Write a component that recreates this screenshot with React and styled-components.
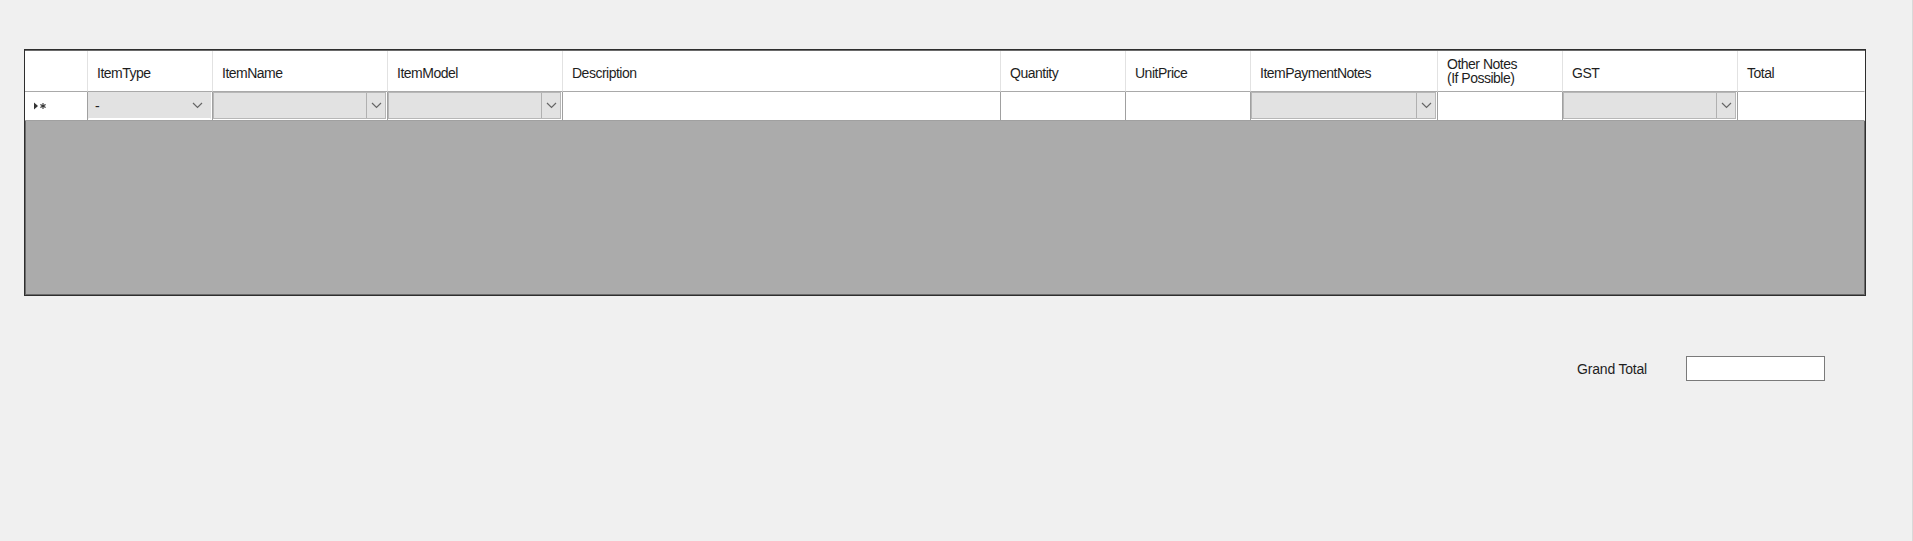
import React from 'react';
import styled, { createGlobalStyle } from 'styled-components';

const GlobalStyle = createGlobalStyle`
    html, body {
        margin: 0;
        padding: 0;
        background: #f0f0f0;
    }
    body {
        font-family: 'Liberation Sans', Arial, sans-serif;
        font-size: 14px;
        color: #1a1a1a;
    }
`;

const Page = styled.div`
    width: 1913px;
    height: 541px;
    box-sizing: border-box;
    padding: 49px 0 0 24px;
    border-right: 1px solid #d9d9d9;
    background: #f0f0f0;
`;

const Grid = styled.div`
    width: 1842px;
    height: 247px;
    box-sizing: border-box;
    border: 1px solid #2e2e2e;
    box-shadow: inset 1px 1px 0 #6a6a6a, inset -1px -1px 0 #6a6a6a;
    background: #ababab;
    display: grid;
    grid-template-columns: 63px 125px 175px 175px 438px 125px 125px 187px 125px 175px 1fr;
    grid-template-rows: 42px 29px;
    align-content: start;
`;

const HeadCell = styled.div`
    background: #fff;
    border-right: 1px solid ${p => (p.$last ? 'transparent' : '#e2e2e2')};
    border-bottom: 1px solid #a9a9a9;
    display: flex;
    align-items: center;
    padding: ${p => (p.$wrap ? '0 9px 1px' : '3px 9px 0')};
    font-size: 14px;
    line-height: 14px;
    letter-spacing: -0.5px;
    color: #1e1e1e;
    margin-top: 1px;
`;

const RowHead = styled.div`
    background: #fff;
    border-right: 1px solid #a0a0a0;
    border-bottom: 1px solid #a0a0a0;
    display: flex;
    align-items: center;
    padding-left: 9px;
`;

const Cell = styled.div`
    background: #fff;
    border-right: 1px solid ${p => (p.$last ? 'transparent' : '#a0a0a0')};
    border-bottom: 1px solid #a0a0a0;
    box-sizing: border-box;
    display: flex;
    padding: ${p => (p.$combo ? '0 1px 1px 0' : '0')};
`;

const Combo = styled.div`
    flex: 1;
    display: flex;
    align-items: center;
    background: #e2e2e2;
    border: 1px solid ${p => (p.$current ? '#e2e2e2' : '#b7b7b7')};
    border-bottom-color: ${p => (p.$current ? '#fff' : '#b7b7b7')};
    box-sizing: border-box;
    font-size: 14px;
    color: #222;
    padding-left: 6px;
`;

const ComboText = styled.span`
    flex: 1;
`;

const DropButton = styled.div`
    width: 19px;
    align-self: stretch;
    display: flex;
    align-items: center;
    justify-content: center;
    box-sizing: border-box;
    border-left: 1px solid ${p => (p.$current ? 'transparent' : '#b0b0b0')};
    margin-right: ${p => (p.$current ? '4px' : '0')};
`;

const Footer = styled.div`
    display: flex;
    justify-content: flex-end;
    align-items: center;
    margin-top: 60px;
    padding-right: 87px;
    gap: 39px;
`;

const Label = styled.span`
    font-size: 14px;
    letter-spacing: -0.2px;
    color: #1e1e1e;
`;

const TextBox = styled.div`
    width: 139px;
    height: 25px;
    box-sizing: border-box;
    background: #fff;
    border: 1px solid #7a7a7a;
`;

const Chevron = () => (
    <svg width="11" height="7" viewBox="0 0 11 7">
        <polyline points="1,1 5.5,5.5 10,1" fill="none" stroke="#666" strokeWidth="1.2" />
    </svg>
);

const NewRowGlyph = () => (
    <svg width="14" height="8" viewBox="0 0 14 8">
        <polygon points="0,0.5 0,7.5 4,4" fill="#333" />
        <g stroke="#333" strokeWidth="1.1">
            <line x1="9" y1="1" x2="9" y2="7" />
            <line x1="6.4" y1="2.5" x2="11.6" y2="5.5" />
            <line x1="6.4" y1="5.5" x2="11.6" y2="2.5" />
        </g>
    </svg>
);

const columns = [
    { title: 'ItemType', combo: true, value: '-', current: true },
    { title: 'ItemName', combo: true },
    { title: 'ItemModel', combo: true },
    { title: 'Description' },
    { title: 'Quantity' },
    { title: 'UnitPrice' },
    { title: 'ItemPaymentNotes', combo: true },
    { title: ['Other Notes', '(If Possible)'] },
    { title: 'GST', combo: true },
    { title: 'Total' },
];

const App = () => (
    <>
        <GlobalStyle />
        <Page>
            <Grid>
                <HeadCell />
                {columns.map((c, i) => (
                    <HeadCell
                        key={i}
                        $last={i === columns.length - 1}
                        $wrap={Array.isArray(c.title)}
                    >
                        {Array.isArray(c.title) ? (
                            <span>{c.title[0]}<br />{c.title[1]}</span>
                        ) : c.title}
                    </HeadCell>
                ))}
                <RowHead><NewRowGlyph /></RowHead>
                {columns.map((c, i) => (
                    <Cell key={i} $combo={c.combo} $last={i === columns.length - 1}>
                        {c.combo && (
                            <Combo $current={c.current}>
                                <ComboText>{c.value || ''}</ComboText>
                                <DropButton $current={c.current}><Chevron /></DropButton>
                            </Combo>
                        )}
                    </Cell>
                ))}
            </Grid>
            <Footer>
                <Label>Grand Total</Label>
                <TextBox />
            </Footer>
        </Page>
    </>
);

export default App;
